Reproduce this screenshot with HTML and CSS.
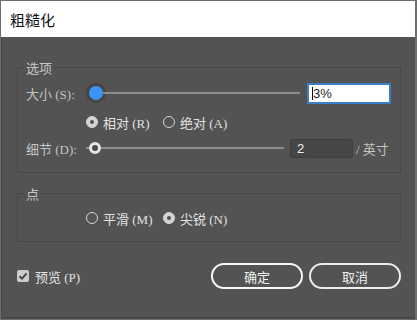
FILE: index.html
```html
<!DOCTYPE html>
<html lang="zh-CN">
<head>
  <meta charset="UTF-8">
  <title>粗糙化</title>
  <link rel="stylesheet" href="styles.css">
</head>
<body>
  <div class="dialog">
    <div class="titlebar">粗糙化</div>
    <div class="content">
      <div class="group group-options">
        <div class="legend">选项</div>
        <div class="row row-size">
          <span class="label">大小 (S):</span>
          <div class="slider slider-size"><span class="knob knob-active"></span></div>
          <div class="field field-focus"><span class="caret"></span>3%</div>
        </div>
        <div class="row row-radios">
          <span class="radio checked"><span class="dot"></span>相对 (R)</span>
          <span class="radio"><span class="dot"></span>绝对 (A)</span>
        </div>
        <div class="row row-detail">
          <span class="label">细节 (D):</span>
          <div class="slider slider-detail"><span class="knob knob-ring"></span></div>
          <div class="field field-dark">2</div>
          <span class="unit">/ 英寸</span>
        </div>
      </div>

      <div class="group group-points">
        <div class="legend">点</div>
        <div class="row row-radios">
          <span class="radio"><span class="dot"></span>平滑 (M)</span>
          <span class="radio checked"><span class="dot"></span>尖锐 (N)</span>
        </div>
      </div>

      <div class="footer">
        <span class="checkbox">
          <span class="box">
            <svg width="12" height="12" viewBox="0 0 12 12"><path d="M2.5 6.2 L5 8.6 L9.6 3.4" fill="none" stroke="#454545" stroke-width="2"/></svg>
          </span>
          预览 (P)
        </span>
        <div class="buttons">
          <button class="btn btn-default">确定</button>
          <button class="btn">取消</button>
        </div>
      </div>
    </div>
  </div>
</body>
</html>
```

FILE: styles.css
```css
body {
  margin: 0;
  background: #535353;
  font-family: "Liberation Serif", "Noto Sans CJK SC", serif;
  font-size: 13px;
  color: #d6d6d6;
}
.dialog {
  width: 417px;
  height: 320px;
  box-sizing: border-box;
  border: 1px solid #6e6e6e;
  border-right-width: 2px;
  background: #535353;
  display: flex;
  flex-direction: column;
}
.titlebar {
  height: 36px;
  line-height: 37px;
  padding-left: 9px;
  background: #fff;
  color: #111;
  font-family: "Noto Sans CJK SC", sans-serif;
  font-size: 15px;
}
.content {
  flex: 1;
  padding: 30px 14px 0 16px;
  box-shadow: inset 1px 0 #484848, inset 0 -2px #484848;
}
.group {
  border: 1px solid #484848;
  padding: 0 8px 14px 8px;
}
.group-points {
  margin-top: 20px;
}
.legend {
  width: fit-content;
  margin: -7px 0 0 -2px;
  padding: 0 2px;
  height: 14px;
  line-height: 14px;
  background: #535353;
  color: #c8c8c8;
  font-family: "Noto Sans CJK SC", sans-serif;
}
.row {
  display: flex;
  align-items: center;
}
.row-size {
  margin-top: 7px;
  height: 22px;
}
.row-radios {
  margin-top: 9px;
  height: 18px;
  padding-left: 60px;
}
.group-points .row-radios {
  margin-top: 8px;
}
.row-detail {
  margin-top: 7px;
  height: 20px;
}
.label {
  width: 60px;
  flex: none;
  color: #c4c4c4;
  white-space: nowrap;
}
.slider {
  display: flex;
  align-items: center;
  flex: none;
}
.slider::before {
  content: "";
  width: 3px;
  height: 2px;
  background: #8c8c8c;
}
.slider::after {
  content: "";
  flex: 1;
  height: 2px;
  background: #8c8c8c;
}
.slider-size {
  width: 214px;
  margin-right: 7px;
}
.slider-detail {
  width: 198px;
  margin-right: 6px;
}
.knob {
  flex: none;
  border-radius: 50%;
  box-sizing: border-box;
}
.knob-active {
  width: 14px;
  height: 14px;
  background: #3b93f2;
  box-shadow: 0 0 0 3px #474542;
}
.knob-ring {
  width: 12px;
  height: 12px;
  border: 3px solid #e6e6e6;
  background: #4a4a4a;
}
.field {
  box-sizing: border-box;
  display: flex;
  align-items: center;
  font-family: "Liberation Sans", sans-serif;
  font-size: 13px;
}
.field-focus {
  width: 84px;
  height: 21px;
  background: #fff;
  border: 2px solid #3d7fc6;
  color: #222;
  padding-left: 3px;
}
.caret {
  width: 1px;
  height: 13px;
  background: #111;
}
.field-dark {
  width: 63px;
  height: 19px;
  background: #464646;
  border: 1px solid #3f3f3f;
  border-radius: 2px;
  color: #f2f2f2;
  padding-left: 6px;
}
.unit {
  margin-left: 3px;
  color: #c4c4c4;
  white-space: nowrap;
}
.radio {
  display: flex;
  align-items: center;
  width: 77px;
  color: #e2e2e2;
  white-space: nowrap;
}
.dot {
  width: 12px;
  height: 12px;
  box-sizing: border-box;
  border-radius: 50%;
  border: 1.5px solid #d4d4d4;
  margin-right: 5px;
  flex: none;
}
.radio.checked .dot {
  background: #d4d4d4;
  display: flex;
  align-items: center;
  justify-content: center;
}
.radio.checked .dot::after {
  content: "";
  width: 4px;
  height: 4px;
  border-radius: 50%;
  background: #505050;
}
.footer {
  margin-top: 21px;
  display: flex;
  align-items: center;
  justify-content: space-between;
}
.checkbox {
  display: flex;
  align-items: center;
  color: #e2e2e2;
}
.box {
  width: 12px;
  height: 12px;
  background: #cdcdcd;
  border-radius: 2px;
  margin-right: 6px;
  display: flex;
}
.buttons {
  display: flex;
  gap: 6px;
}
.btn {
  width: 92px;
  height: 26px;
  border-radius: 13px;
  border: 2px solid #ececec;
  background: transparent;
  color: #f0f0f0;
  font-family: "Noto Sans CJK SC", sans-serif;
  font-size: 13px;
  padding: 0;
}
.btn-default {
  border-color: #f8f8f8;
}
```
